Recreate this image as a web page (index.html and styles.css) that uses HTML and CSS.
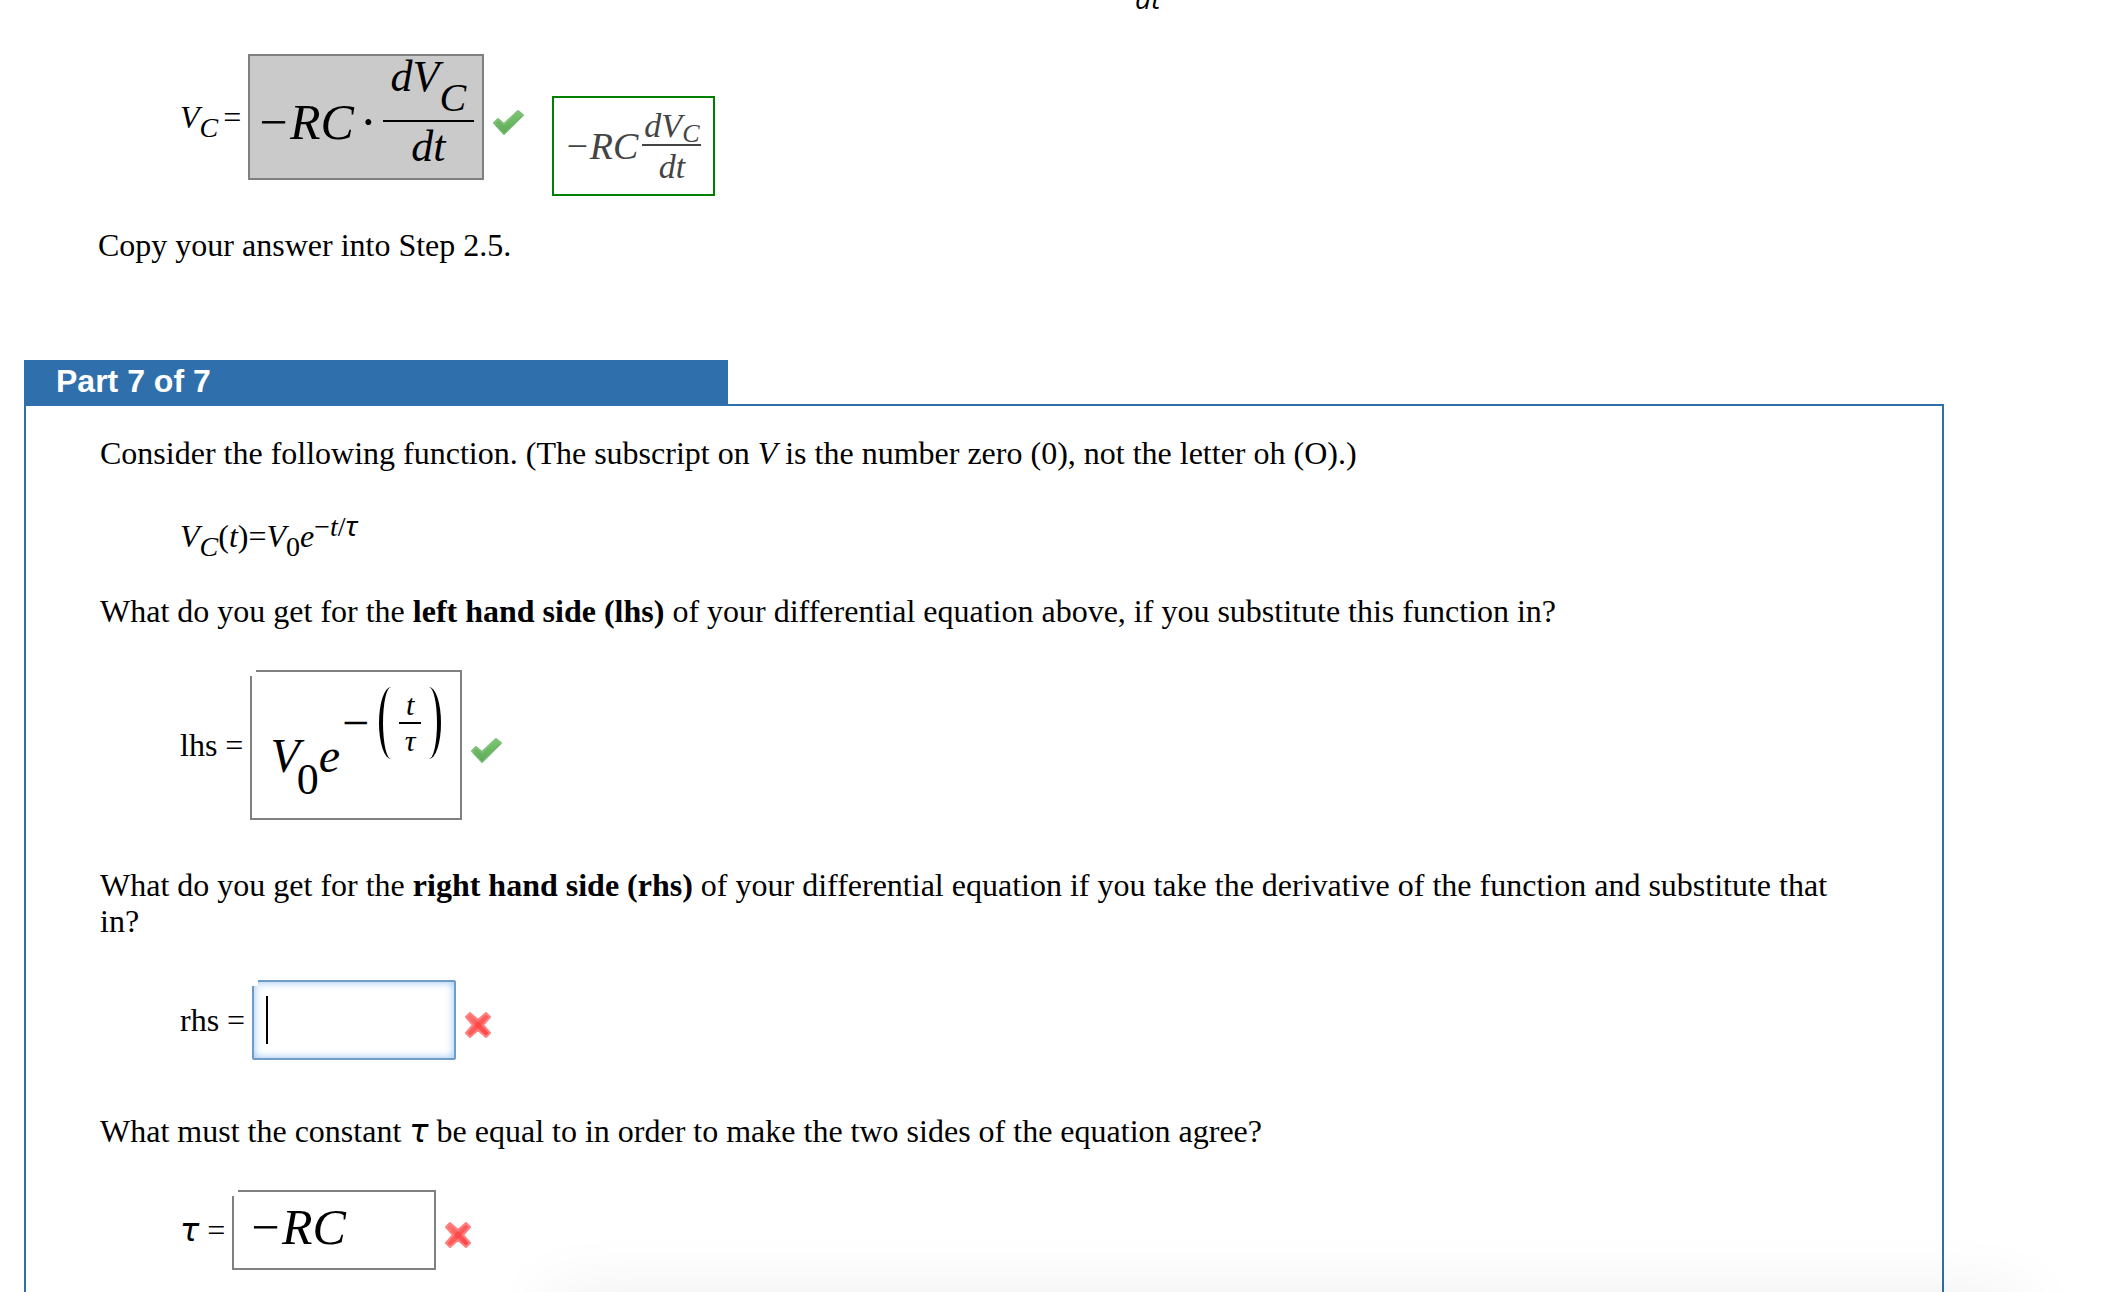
FILE: index.html
```html
<!DOCTYPE html>
<html lang="en">
<head>
<meta charset="utf-8">
<title>Part 7 of 7</title>
<link rel="stylesheet" href="styles.css">
</head>
<body>
<svg class="defs" width="0" height="0" aria-hidden="true">
  <defs>
    <linearGradient id="green" x1="0" y1="0" x2="0" y2="1"><stop offset="0" stop-color="#7cc66f"/><stop offset="1" stop-color="#5cab58"/></linearGradient>
    <linearGradient id="red" x1="0" y1="0" x2="1" y2="1"><stop offset="0" stop-color="#ff7a7a"/><stop offset="1" stop-color="#fb3c3c"/></linearGradient>
    <symbol id="check" viewBox="0 0 32 28">
      <path d="M2 15 L6 11 L12 16 L26 3 L31 7 L12 26 Z" fill="url(#green)" stroke="#7fc07a" stroke-width="2" stroke-linejoin="round"/>
      <path d="M4 17 L12 25 L30 8" fill="none" stroke="#4b9c4b" stroke-width="1" opacity=".6"/>
    </symbol>
    <symbol id="cross" viewBox="0 0 28 28">
      <path d="M6 2 L14 9 L22 2 L26 6 L19 14 L26 22 L22 26 L14 19 L6 26 L2 22 L9 14 L2 6 Z" fill="url(#red)" stroke="#ff8080" stroke-width="2" stroke-linejoin="round"/>
      <circle cx="14" cy="14" r="3" fill="#fb3c3c" opacity=".6"/>
    </symbol>
  </defs>
</svg>

<header class="previous-line"><i>dt</i></header>

<main>
  <section class="previous">
    <div class="row">
      <span class="label"><i>V<sub>C</sub></i><span class="equals">=</span></span>
      <div class="answer graded">
        <span class="term">−RC<span class="dot">·</span></span>
        <span class="fraction"><span class="num">dV<sub>C</sub></span><span class="den">dt</span></span>
      </div>
      <svg class="mark" width="32" height="28" role="img" aria-label="Correct"><use href="#check"/></svg>
      <div class="key">
        <span class="term">−RC</span>
        <span class="fraction"><span class="num">dV<sub>C</sub></span><span class="den">dt</span></span>
      </div>
    </div>
    <p>Copy your answer into Step 2.5.</p>
  </section>

  <section class="part">
    <h2>Part 7 of 7</h2>
    <div class="part-body">
      <p>Consider the following function. (The subscript on <i>V</i> is the number zero (0), not the letter oh (O).)</p>
      <p class="equation"><i>V<sub>C</sub></i>(<i>t</i>)=<i>V</i><sub>0</sub><i>e</i><sup>−<i>t</i>/<i class="tau">τ</i></sup></p>
      <p>What do you get for the <b>left hand side (lhs)</b> of your differential equation above, if you substitute this function in?</p>
      <div class="row">
        <span class="label">lhs =</span>
        <div class="answer notched exponential">
          <span class="base"><i>V</i><sub>0</sub><i>e</i></span>
          <span class="exponent">
            <span class="minus">−</span>
            <span class="fence open"></span>
            <span class="small-fraction"><i>t</i><i>τ</i></span>
            <span class="fence close"></span>
          </span>
        </div>
        <svg class="mark" width="32" height="28" role="img" aria-label="Correct"><use href="#check"/></svg>
      </div>
      <p>What do you get for the <b>right hand side (rhs)</b> of your differential equation if you take the derivative of the function and substitute that in?</p>
      <div class="row">
        <label class="label" for="rhs">rhs =</label>
        <span class="notched active"><input id="rhs" type="text"><span class="caret"></span></span>
        <svg class="mark" width="28" height="28" role="img" aria-label="Incorrect"><use href="#cross"/></svg>
      </div>
      <p class="last">What must the constant <i class="tau">τ</i> be equal to in order to make the two sides of the equation agree?</p>
      <div class="row">
        <label class="label" for="tau"><i class="tau">τ</i> =</label>
        <span class="notched"><input id="tau" type="text" value="−RC"></span>
        <svg class="mark" width="28" height="28" role="img" aria-label="Incorrect"><use href="#cross"/></svg>
      </div>
    </div>
  </section>
</main>
<div class="window-shadow"></div>
</body>
</html>
```
FILE: styles.css
```css
* { box-sizing: border-box; }
html { overflow: hidden; }
body {
  margin: 0;
  background: #fff;
  color: #000;
  font: 32px/36px "Liberation Serif", "Times New Roman", serif;
}
p, h2 { margin: 0; }
sub, sup { font-size: 28px; line-height: 0; }
sub { vertical-align: -9px; }
sup { vertical-align: 11px; }
.tau { font-family: "DejaVu Sans", sans-serif; line-height: 0; }
sup .tau { font-family: "Noto Sans", sans-serif; }
.defs { position: absolute; }

.previous-line {
  height: 54px;
  margin-left: 1135px;
  overflow: hidden;
  font: 28px/36px "Open Sans", sans-serif;
}
.previous-line i { display: block; margin-top: -20px; }

.previous { padding-left: 98px; }
.previous .row { padding-left: 82px; }
.previous p { margin: 47px 0 97px; }

.row { display: flex; align-items: center; padding-left: 80px; }
.label { margin-right: 7px; white-space: nowrap; }
.equals { margin-left: 5px; }
.mark { flex: none; margin: 10px 0 0 8px; }

.answer { border: 2px solid #808080; font-size: 48px; font-style: italic; }
.graded {
  display: flex;
  align-items: center;
  padding: 0 8px 0 6px;
  background: #cacaca;
}
.graded .term { padding-top: 10px; font-size: 50px; }
.dot { margin: 0 6px; font-style: normal; }

.fraction { display: flex; flex-direction: column; text-align: center; font-size: 44px; }
.num { height: 66px; padding: 0 8px; border-bottom: 2px solid #000; line-height: 42px; }
.num sub { font-size: 40px; vertical-align: -20px; }
.den { height: 56px; line-height: 50px; }

/* The key is centred on its own fraction bar, below the centre of the row. */
.key {
  display: flex;
  align-items: center;
  gap: 4px;
  height: 100px;
  margin: 42px 0 -16px 28px;
  padding: 0 12px 0 10px;
  border: 2px solid #008000;
  color: #444;
  font-size: 38px;
  font-style: italic;
}
.key .fraction { font-size: 34px; }
.key .num { height: 42px; padding: 0 2px; border-color: #444; line-height: 44px; }
.key .num sub { font-size: 26px; vertical-align: -5px; }
.key .den { height: 42px; line-height: 42px; }

.part { margin: 0 172px 0 24px; }
.part h2 {
  width: 704px;
  max-width: 100%;
  height: 44px;
  padding-left: 32px;
  background: #2f6fac;
  color: #fff;
  font: bold 32px/42px "Liberation Sans", Arial, sans-serif;
}
.part-body { padding: 29px 74px 0; border: solid #2f6fac; border-width: 2px 2px 0; }
.part-body .equation { margin: 47px 0 39px; padding-left: 80px; }
.part-body .row { margin: 41px 0 47px; }
.part-body .last { margin-top: 53px; }
.part-body .row:last-child { margin-bottom: 0; padding-bottom: 22px; }

.notched { position: relative; }
.notched::before {
  content: "";
  position: absolute;
  z-index: 1;
  top: 0;
  left: 0;
  width: 6px;
  height: 6px;
  background: #fff;
}
.answer.notched::before { top: -2px; left: -2px; }

.notched input {
  display: block;
  width: 204px;
  height: 80px;
  padding: 0 14px 6px;
  border: 2px solid #808080;
  border-radius: 0;
  background: #fff;
  color: #000;
  font: italic 50px "Liberation Serif", "Times New Roman", serif;
  outline: none;
}
.active input { border-color: #6f9bc4; border-radius: 2px; box-shadow: inset 0 0 8px #8fc0f5; }
.caret { position: absolute; top: 16px; left: 14px; width: 2px; height: 48px; background: #000; }

.exponential { display: flex; height: 150px; padding: 0 19px 0 18px; }
.base { padding-top: 56px; line-height: 56px; }
.base sub { margin-left: -3px; font-size: 44px; font-style: normal; vertical-align: -22px; }
.exponent { display: flex; align-items: center; height: 72px; margin: 15px 0 0 2px; font-style: normal; }
.minus { margin-right: 10px; }
.fence { width: 12px; height: 72px; }
.open { border-left: 4px solid #000; border-radius: 12px 0 0 12px / 36px 0 0 36px; }
.close { border-right: 4px solid #000; border-radius: 0 12px 12px 0 / 0 36px 36px 0; }
.small-fraction { display: flex; flex-direction: column; width: 22px; margin: 0 8px; font-size: 30px; line-height: 34px; text-align: center; }
.small-fraction i:first-child { border-bottom: 2px solid #000; }

.window-shadow {
  position: fixed;
  right: 106px;
  bottom: -40px;
  left: 560px;
  height: 20px;
  box-shadow: 0 0 70px 10px rgba(0, 0, 0, .1);
  pointer-events: none;
}
```
